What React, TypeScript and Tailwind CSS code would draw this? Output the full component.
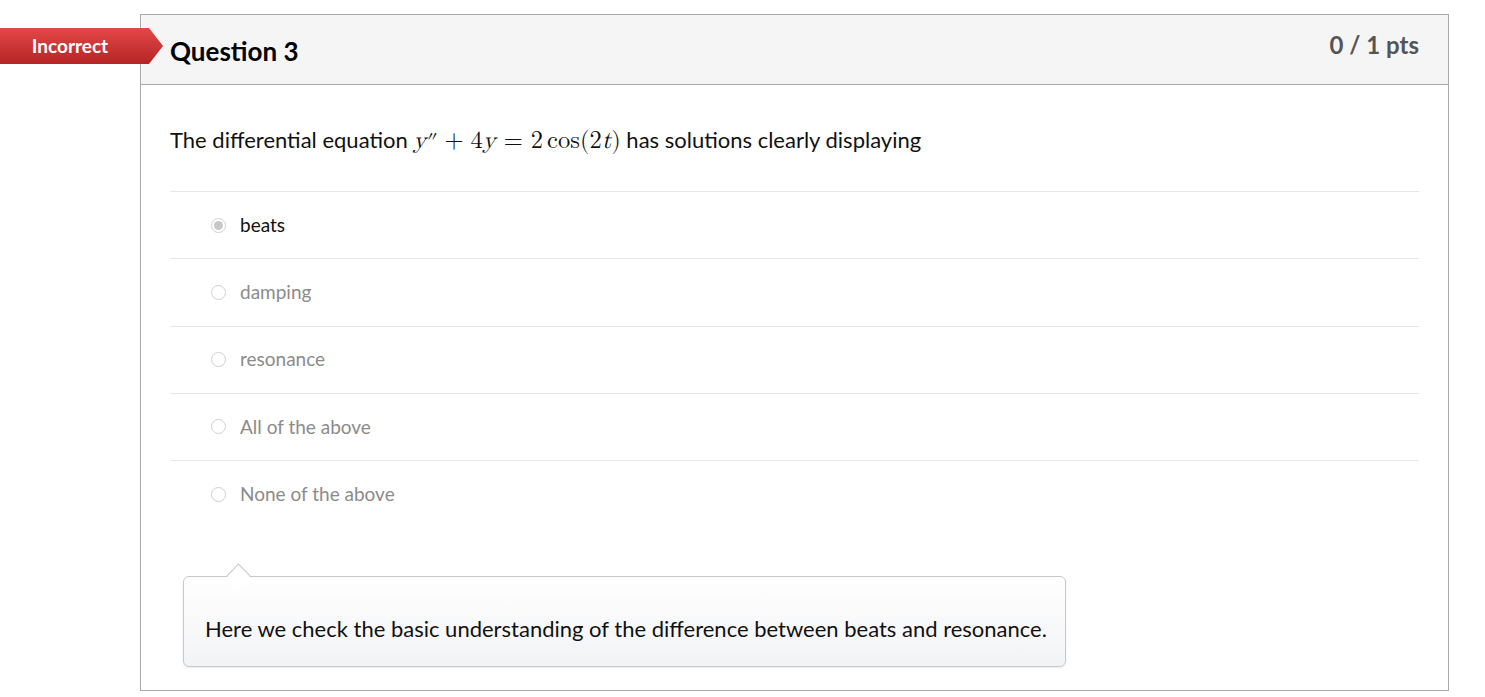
import React from "react";

const answers = [
  { label: "beats", selected: true },
  { label: "damping", selected: false },
  { label: "resonance", selected: false },
  { label: "All of the above", selected: false },
  { label: "None of the above", selected: false },
];

function MathEq() {
  return (
    <span className="inline-flex items-baseline text-[24.5px] text-[#111] leading-[28px]" style={{ fontFamily: '"Latin Modern Math", "DejaVu Serif", "Liberation Serif", serif' }}>
      <span className="italic">y</span>
      <span className="text-[20px] ml-[1px]">″</span>
      <span className="mx-[7px]">+</span>
      <span>4</span>
      <span className="italic">y</span>
      <span className="mx-[8px]">=</span>
      <span>2</span>
      <span className="ml-[4px]">cos</span>
      <span>(</span>
      <span>2</span>
      <span className="italic">t</span>
      <span>)</span>
    </span>
  );
}

export default function App() {
  return (
    <div className="relative w-[1485px] h-[697px] bg-white" style={{ fontFamily: 'Lato, "Liberation Sans", sans-serif' }}>
      <div className="absolute left-0 top-[28px] w-[163px] h-[36px] bg-gradient-to-b from-[#e44747] to-[#b52424] [clip-path:polygon(0_0,149px_0,163px_50%,149px_100%,0_100%)] flex items-center z-10">
        <span className="w-[140px] text-center text-white font-bold text-[19px]">Incorrect</span>
      </div>
      <div className="pt-[14px] pl-[140px]">
        <div className="w-[1309px] h-[677px] border border-[#aaaaaa] flex flex-col">
          <div className="h-[70px] bg-[#f5f5f5] border-b border-[#aaaaaa] flex justify-between items-start px-[29px]">
            <div className="mt-[20px] text-[26px] font-bold text-black leading-[32px]">Question 3</div>
            <div className="mt-[15px] text-[24px] font-bold text-[#555] leading-[30px]">0 / 1 pts</div>
          </div>
          <div className="px-[29px] pt-[41px]">
            <div className="text-[22px] leading-[28px] text-[#111] flex items-baseline">
              <span>The differential equation&nbsp;</span>
              <MathEq />
              <span>&nbsp;has solutions clearly displaying</span>
            </div>
            <div className="mt-[35px]">
              {answers.map((a) => (
                <div key={a.label} className="h-[67.25px] border-t border-[#e6e6e6] flex items-center">
                  <div className="ml-[41px] w-[15px] h-[15px] rounded-full border border-[#d0d0d0] flex items-center justify-center bg-white">
                    {a.selected && <div className="w-[9px] h-[9px] rounded-full bg-[#c8c8c8]" />}
                  </div>
                  <span className={`ml-[14px] text-[19px] ${a.selected ? "text-[#111]" : "text-[#8b8b8b]"}`}>{a.label}</span>
                </div>
              ))}
            </div>
            <div className="relative ml-[13px] mt-[49px] w-[883px]">
              <div className="absolute left-[47px] -top-[9px] w-[17px] h-[17px] rotate-45 bg-white border-l border-t border-[#c4c9cd] z-10" />
              <div className="h-[91px] rounded-[6px] border border-[#c4c9cd] bg-gradient-to-b from-white to-[#f2f3f5] shadow-[0_1px_2px_rgba(0,0,0,0.08)] flex items-center px-[21px] pt-[14px]">
                <span className="text-[22px] text-[#111] whitespace-nowrap">Here we check the basic understanding of the difference between beats and resonance.</span>
              </div>
            </div>
          </div>
        </div>
      </div>
    </div>
  );
}
